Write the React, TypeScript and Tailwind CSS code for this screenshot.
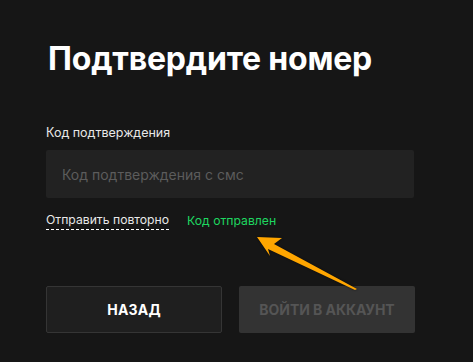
export default function App() {
  return (
    <div className="relative h-[362px] w-[473px] overflow-hidden bg-[#161616] px-[46px] pt-[39px] font-['Inter',sans-serif] text-white">
      <h1 className="text-[32px] leading-10 font-bold tracking-[-0.2px] pl-[2px]">Подтвердите номер</h1>

      <div className="mt-[46px] text-[12.5px] leading-4 text-[#e8e8e8]">Код подтверждения</div>
      <div className="mt-[9px] flex h-12 w-[368px] items-center rounded-[2px] bg-[#222222] pl-4 text-[14px] text-[#5c5c5c]">
        Код подтверждения с смс
      </div>

      <div className="mt-[14px] flex items-center gap-[18px] text-[12.2px] leading-4">
        <span className="border-b border-dashed border-white pb-[1px] text-[#e8e8e8]">Отправить повторно</span>
        <span className="text-[#1ed760]">Код отправлен</span>
      </div>

      <div className="mt-[56px] flex gap-[17px]">
        <button className="flex h-[47px] w-[176px] items-center justify-center rounded-[2px] border border-[#353535] bg-[#1f1f1f] text-[14px] font-bold tracking-[0.2px] text-white">
          НАЗАД
        </button>
        <button className="flex h-[47px] w-[176px] items-center justify-center rounded-[2px] bg-[#333333] text-[14px] font-bold tracking-[-0.05px] text-[#555555]">
          ВОЙТИ В АККАУНТ
        </button>
      </div>

      <svg className="pointer-events-none absolute left-0 top-0" width="473" height="362" viewBox="0 0 473 362">
        <polygon
          points="257,237 282,238 274,244 357,289 355,290 268,249 270,256"
          fill="#ffa600"
          style={{ filter: "drop-shadow(0 0 1px rgba(0,0,0,0.6))" }}
        />
      </svg>
    </div>
  );
}
